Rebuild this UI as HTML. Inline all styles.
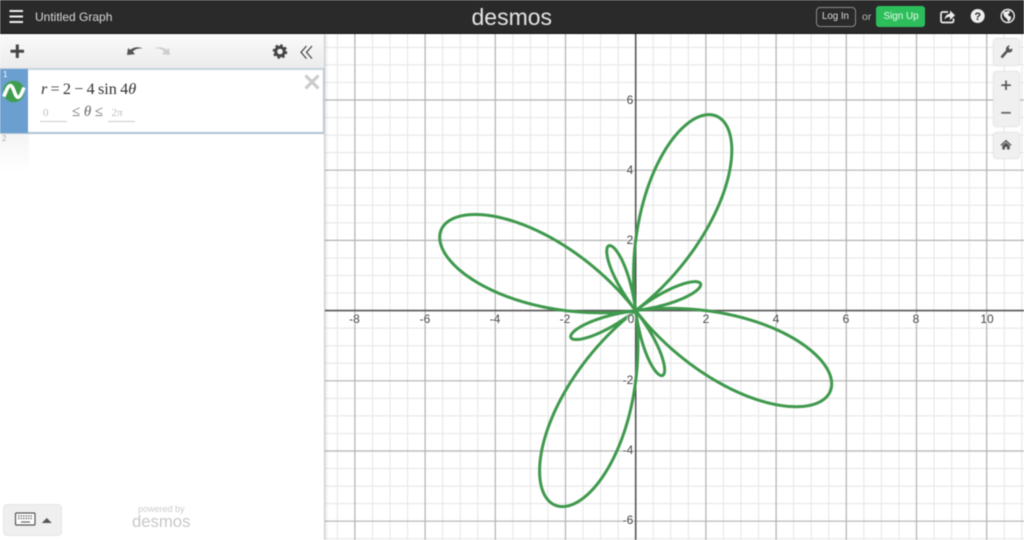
<!DOCTYPE html>
<html><head><meta charset="utf-8"><title>Untitled Graph</title>
<style>
html,body{margin:0;padding:0;width:1024px;height:540px;overflow:hidden;background:#fff;font-family:"Liberation Sans",sans-serif}
#w{position:absolute;left:0;top:0;width:1024px;height:540px;overflow:hidden;background:#fff;filter:blur(.4px)}
.a{position:absolute}
#top{left:0;top:0;width:1024px;height:34px;background:#2a2a2a;border-bottom:1px solid #111;box-sizing:border-box}
.t{position:absolute;white-space:nowrap;line-height:1}
.lb{position:absolute;font-size:12px;line-height:14px;color:#444;white-space:nowrap;transform:translate(-50%,-50%);text-shadow:0 0 2px #fff,0 0 2px #fff,0 0 2px #fff}
.tool{position:absolute;left:993px;width:27px;background:#f0f0f0;border:1px solid #e6e6e6;border-radius:4px;box-sizing:border-box;box-shadow:0 0 2px rgba(0,0,0,.08)}
.m{font-family:"Liberation Serif",serif;color:#333}
</style></head><body><div id="w">
<svg id="g" class="a" style="left:0;top:0" width="1024" height="540" viewBox="0 0 1024 540"></svg>

<div class="lb" style="left:354.500px;top:319px">-8</div>
<div class="lb" style="left:425px;top:319px">-6</div>
<div class="lb" style="left:495px;top:319px">-4</div>
<div class="lb" style="left:565px;top:319px">-2</div>
<div class="lb" style="left:631px;top:319px">0</div>
<div class="lb" style="left:706px;top:319px">2</div>
<div class="lb" style="left:776px;top:319px">4</div>
<div class="lb" style="left:846px;top:319px">6</div>
<div class="lb" style="left:916px;top:319px">8</div>
<div class="lb" style="left:987px;top:319px">10</div>
<div class="lb" style="left:630px;top:100px">6</div>
<div class="lb" style="left:630px;top:170px">4</div>
<div class="lb" style="left:630px;top:240px">2</div>
<div class="lb" style="left:628px;top:380px">-2</div>
<div class="lb" style="left:628px;top:450px">-4</div>
<div class="lb" style="left:628px;top:520px">-6</div>

<!-- left panel -->
<div class="a" style="left:0;top:34px;width:324px;height:506px;background:#fff;border-right:1px solid #ccc;box-shadow:1px 0 3px rgba(0,0,0,.14)"></div>
<div class="a" style="left:0;top:34px;width:324px;height:34px;background:linear-gradient(#fafafa,#ececec)"></div>
<div class="a" style="left:0;top:68px;width:324px;height:66px;box-sizing:border-box;border:1px solid #b0c4d4;border-top:2px solid #c6d2dc;border-bottom:2px solid #b0c4d4;background:#fff"></div>
<div class="a" style="left:0;top:69px;width:28px;height:64px;background:#6b9fcf"></div>
<div class="a" style="left:0;top:134px;width:29px;height:38px;background:linear-gradient(#f5f5f5,#fff)"></div>
<div class="t" style="left:3px;top:71px;font-size:8px;color:#fff">1</div>
<div class="t" style="left:2px;top:135px;font-size:8px;color:#aaa">2</div>

<svg class="a" style="left:0;top:34px" width="324" height="106" viewBox="0 34 324 106">
<path d="M17.300 44.500v13.500M10.500 51.300h13.500" stroke="#444" stroke-width="3" fill="none"/>
<path d="M127 55l1-7 2.300 1.700c3.700-3 8.700-3.200 12.700-1-3.800-.6-7.500 0-10.200 2.700l2.200 2.800z" fill="#555"/>
<path d="M170 55l-1-7-2.300 1.700c-3.700-3-8.700-3.200-12.700-1 3.800-.6 7.500 0 10.200 2.700l-2.200 2.800z" fill="#cfcfcf"/>
<circle cx="280" cy="51.500" r="4.300" fill="none" stroke="#444" stroke-width="3"/>
<circle cx="280" cy="51.500" r="6.300" fill="none" stroke="#444" stroke-width="2" stroke-dasharray="2.500 2.450"/>
<path d="M306.500 46l-5.500 6.300 5.500 6.300M312 46l-5.500 6.300 5.500 6.300" fill="none" stroke="#444" stroke-width="1.200"/>
<circle cx="13.700" cy="91.500" r="10.800" fill="#3f9e4d"/>
<path d="M3.800 96.500C6.200 91 8 85.500 10.300 85.500 13.500 85.500 15 97.300 18 97.300 20.300 97.300 22.300 92 24 87.500" fill="none" stroke="#fff" stroke-width="3.600"/>
<path d="M305.500 75.500l13 13M318.500 75.500l-13 13" stroke="#ccc" stroke-width="3.200" fill="none"/>
<path d="M40 121.500h27M108 121.500h27" stroke="#ccc" stroke-width="1" fill="none"/>
</svg>

<div class="t m" style="left:41px;top:81px;font-size:16.200px"><i>r</i>&#8201;=&#8201;2&#8201;−&#8201;4&#8201;sin&#8201;4<i>θ</i></div>
<div class="t m" style="left:43px;top:108px;font-size:11px;color:#bbb">0</div>
<div class="t m" style="left:72px;top:105px;font-size:15px;color:#666;letter-spacing:.3px">≤&#8201;<i>θ</i>&#8201;≤</div>
<div class="t m" style="left:111.500px;top:108px;font-size:11px;color:#bbb">2π</div>

<!-- keyboard and powered by -->
<div class="a" style="left:3px;top:504px;width:59px;height:32px;background:#efefef;border:1px solid #e6e6e6;border-radius:4px;box-sizing:border-box"></div>
<svg class="a" style="left:0;top:500px" width="70" height="40" viewBox="0 500 70 40">
<rect x="15.500" y="513" width="19.500" height="12" rx="1" fill="#fff" stroke="#555" stroke-width="1.200"/>
<path d="M18 516h15M18 518.500h15" stroke="#666" stroke-width="1.200" stroke-dasharray="1.500 1"/>
<path d="M21 522h9" stroke="#666" stroke-width="1.200"/>
<path d="M41.800 523l5-5 5 5z" fill="#555"/>
</svg>
<div class="t" style="left:138px;top:505px;font-size:9px;color:#ccc">powered by</div>
<div class="t" style="left:132px;top:513.500px;font-size:16.700px;color:#c8c8c8">desmos</div>

<!-- top bar -->
<div id="top" class="a"></div>
<svg class="a" style="left:0;top:0" width="34" height="34"><path d="M9.500 11h13.500M9.500 16.500h13.500M9.500 22h13.500" stroke="#f0f0f0" stroke-width="2"/></svg>
<div class="t" style="left:35px;top:11px;font-size:12px;color:#d8d8d8">Untitled Graph</div>
<div class="t" style="left:471.500px;top:6px;font-size:23px;color:#e4e4e4">desmos</div>
<div class="a" style="left:816px;top:7px;width:40px;height:20px;box-sizing:border-box;border:1px solid #8a8a8a;border-radius:4px"></div>
<div class="t" style="left:822px;top:12px;font-size:9.700px;color:#ddd">Log In</div>
<div class="t" style="left:862px;top:12px;font-size:10.500px;color:#bbb">or</div>
<div class="a" style="left:876px;top:6px;width:49px;height:21px;background:#2dbe5c;border-radius:3px"></div>
<div class="t" style="left:883.500px;top:11.500px;font-size:9.900px;color:#eafbe9">Sign Up</div>
<svg class="a" style="left:935px;top:0" width="89" height="34" viewBox="935 0 89 34">
<path d="M948 12h-5.500a1.500 1.500 0 0 0-1.500 1.500v7.500a1.500 1.500 0 0 0 1.500 1.500h9.500a1.500 1.500 0 0 0 1.500-1.500v-2.500" fill="none" stroke="#eee" stroke-width="1.700"/>
<path d="M944.500 19.500c.5-3.500 2.500-5.500 5.500-5.700v-3.300l5 4.800-5 4.800v-3.200c-2.300 0-4 .7-5.500 2.600z" fill="#eee"/>
<circle cx="977.700" cy="16" r="7" fill="#eee"/>
<text x="977.700" y="20" font-size="11" font-weight="bold" text-anchor="middle" fill="#2a2a2a" font-family="Liberation Sans">?</text>
<circle cx="1007.700" cy="16" r="6.500" fill="none" stroke="#eee" stroke-width="1.400"/>
<path d="M1003.500 11.500c2 .5 3.500 0 5-1 1.500 1 2 2 .5 3-1.500.5-1 2 .5 2.500 2 .5 2 2 1 3.500-1 1-1.500 2-2.500 2.500 0-2-1-3-2-4-1.500-1-3-2.500-2.500-6.500z" fill="#eee"/>
</svg>

<!-- right tools -->
<div class="tool" style="top:38px;height:27.500px"></div>
<div class="tool" style="top:70.500px;height:56px"></div>
<div class="tool" style="top:131.500px;height:27px"></div>
<svg class="a" style="left:990px;top:36px" width="34" height="126" viewBox="990 36 34 126">
<path d="M1001.500 57.500l6.500-7.500" stroke="#555" stroke-width="2.600" fill="none"/>
<path d="M1006.500 51.500c-1.500-2.500 0-6 3.500-6.500l-1.500 2.500 1.500 2 2.500-1c.2 3.500-3 5.500-6 3z" fill="#555"/>
<path d="M1006 80.500v9.500M1001.300 85.200h9.500" stroke="#555" stroke-width="1.700"/>
<path d="M1001.300 112.800h9.500" stroke="#666" stroke-width="1.800"/>
<path d="M1000.300 145l5.700-5.300 5.700 5.300-1 .8-4.700-4.300-4.700 4.300z" fill="#555"/>
<path d="M1002.300 145.500l3.700-3.300 3.700 3.300v4h-2.700v-2.500h-2v2.500h-2.700z" fill="#555"/>
</svg>
</div>
<script>
(function(){
var s=document.getElementById('g'),ox=635.7,oy=310.6,u=35.1,h='',k,x,y;
function ln(a,b,c,d,col,w){return '<line x1="'+a+'" y1="'+b+'" x2="'+c+'" y2="'+d+'" stroke="'+col+'" stroke-width="'+w+'"/>';}
for(k=-30;k<=30;k++){
  if(k%4===0)continue;
  x=ox+k*u/2;y=oy+k*u/2;
  h+=ln(x,34,x,540,'#e6e6e6',1)+ln(324,y,1024,y,'#e6e6e6',1);
}
for(k=-8;k<=8;k++){
  if(k===0)continue;
  x=ox+k*2*u;y=oy+k*2*u;
  h+=ln(x,34,x,540,'#b2b2b2',1.200)+ln(324,y,1024,y,'#b2b2b2',1.200);
}
h+=ln(ox,34,ox,540,'#555',1.600)+ln(324,oy,1024,oy,'#555',1.600);
var d='',n=1600,i,t,r;
for(i=0;i<=n;i++){
  t=i/n*2*Math.PI;r=2-4*Math.sin(4*t);
  d+=(i?'L':'M')+(ox+u*r*Math.cos(t)).toFixed(2)+' '+(oy-u*r*Math.sin(t)).toFixed(2);
}
h+='<path d="'+d+'" fill="none" stroke="#3f994d" stroke-width="3" stroke-linejoin="round"/>';
s.innerHTML=h;
})();
</script>
</body></html>
